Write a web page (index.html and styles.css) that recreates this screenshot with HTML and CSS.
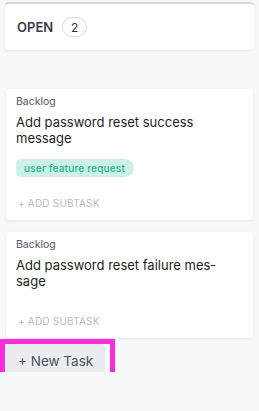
FILE: index.html
```html
<!DOCTYPE html>
<html lang="en">
<head>
<meta charset="utf-8">
<link rel="stylesheet" href="styles.css">
</head>
<body>
<div class="column">
  <div class="column-header">
    <span class="column-title">OPEN</span>
    <span class="count">2</span>
  </div>
  <div class="cards">
    <div class="card">
      <div class="status">Backlog</div>
      <div class="title">Add password reset success message</div>
      <div class="tags"><span class="tag">user feature request</span></div>
      <div class="subtask">+ Add subtask</div>
    </div>
    <div class="card">
      <div class="status">Backlog</div>
      <div class="title title-notags">Add password reset failure mes&shy;sage</div>
      <div class="subtask">+ Add subtask</div>
    </div>
  </div>
  <div class="new-task-wrap">
    <button class="new-task">+ New Task</button>
  </div>
</div>
</body>
</html>
```
FILE: styles.css
```css
html, body {
  margin: 0;
  padding: 0;
  background: #f7f8fa;
  font-family: Inter, "Noto Sans", sans-serif;
}
.column {
  padding: 2px 5px 0;
  display: flex;
  flex-direction: column;
}
.column-header {
  height: 46px;
  background: #fff;
  border-top: 2px solid #d6d6da;
  border-radius: 4px;
  box-shadow: 0 1px 3px rgba(20, 30, 50, 0.07);
  display: flex;
  align-items: center;
  padding-left: 12px;
  gap: 9px;
}
.column-title {
  font-size: 13px;
  font-weight: 600;
  color: #3b3c4a;
}
.count {
  box-sizing: border-box;
  width: 25px;
  height: 20px;
  border: 1px solid #d9d9dd;
  border-radius: 10px;
  display: flex;
  align-items: center;
  justify-content: center;
  font-size: 12px;
  color: #2f3038;
}
.cards {
  margin: 39px 1px 0;
  display: flex;
  flex-direction: column;
  gap: 12px;
}
.card {
  background: #fff;
  border-radius: 4px;
  box-shadow: 0 1px 3px rgba(20, 30, 50, 0.08);
  padding: 6px 10px 10px;
}
.status {
  font-size: 10.5px;
  line-height: 14px;
  color: #55566a;
}
.title {
  margin-top: 5px;
  padding-right: 20px;
  font-size: 13px;
  line-height: 16px;
  color: #1d1e24;
  hyphens: manual;
}
.title-notags {
  margin-bottom: 25px;
}
.tags {
  margin-top: 13px;
  margin-bottom: 19px;
  display: flex;
}
.tag {
  height: 18px;
  line-height: 18px;
  padding: 0 9px 0 8px;
  border-radius: 5px 9px 9px 5px;
  background: #cdf0e6;
  color: #21b48a;
  font-size: 10px;
  font-weight: 500;
  letter-spacing: 0.2px;
}
.subtask {
  font-size: 10px;
  line-height: 14px;
  color: #b8bbc3;
  text-transform: uppercase;
  letter-spacing: 0.2px;
  padding-left: 2px;
}
.new-task-wrap {
  margin-top: 6px;
  width: 105px;
  height: 28px;
  outline: 5px solid #ff2bdc;
  overflow: hidden;
}
.new-task {
  box-sizing: border-box;
  margin-left: 1px;
  width: 99px;
  height: 31px;
  padding: 2px 0 0 12px;
  border: none;
  border-radius: 4px;
  background: #ebecef;
  color: #4b5060;
  font-family: Inter, "Noto Sans", sans-serif;
  font-size: 13.5px;
  text-align: left;
}
```
